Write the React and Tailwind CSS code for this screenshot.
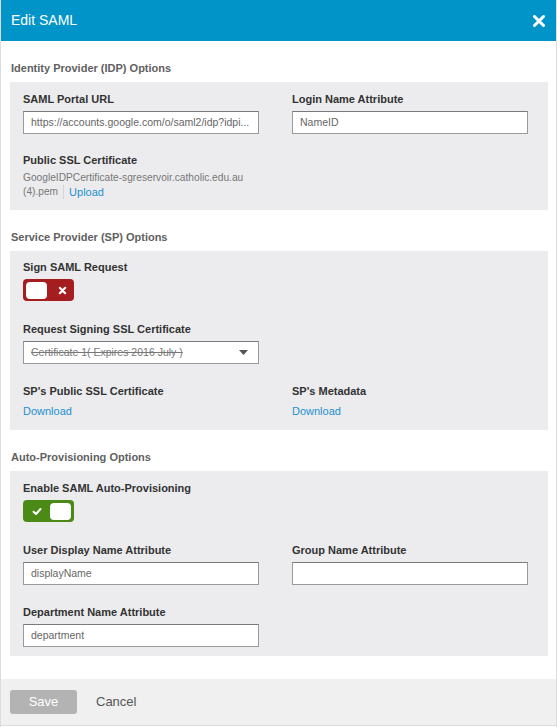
import React from "react";

const font = { fontFamily: '"Liberation Sans", Arial, sans-serif' };

function Label({ children }) {
  return <div className="text-[11px] leading-[14px] font-bold text-[#333]">{children}</div>;
}

function TextInput({ value }) {
  return (
    <div className="mt-[5px] h-[23px] w-[236px] bg-white border border-[#9a9a9a] border-t-[#7a7a7a] flex items-center px-[7px] text-[10.5px] text-[#666] overflow-hidden whitespace-nowrap">
      {value}
    </div>
  );
}

function SectionTitle({ children }) {
  return <div className="ml-[10px] text-[11px] leading-[14px] font-bold text-[#5f5f5f] mb-[7px]">{children}</div>;
}

function Panel({ children, className = "" }) {
  return <div className={"ml-[9px] w-[538px] bg-[#ececee] pl-[13px] " + className}>{children}</div>;
}

function ToggleOff() {
  return (
    <div className="mt-[5px] w-[51px] h-[22px] rounded-[4px] bg-[#a61d1f] flex items-center px-[3px]">
      <div className="w-[21px] h-[17px] rounded-[4px] bg-white" />
      <svg width="9" height="9" viewBox="0 0 10 10" className="ml-[11px]">
        <path d="M2 2 L8 8 M8 2 L2 8" stroke="white" strokeWidth="2.4" strokeLinecap="round" />
      </svg>
    </div>
  );
}

function ToggleOn() {
  return (
    <div className="mt-[5px] w-[51px] h-[22px] rounded-[4px] bg-[#4c8a17] flex items-center px-[3px]">
      <svg width="10" height="9" viewBox="0 0 10 9" className="ml-[6px]">
        <path d="M1.5 4.8 L4 7 L8.5 2" stroke="white" strokeWidth="2" fill="none" strokeLinecap="round" strokeLinejoin="round" />
      </svg>
      <div className="ml-auto w-[21px] h-[17px] rounded-[4px] bg-white" />
    </div>
  );
}

export default function App() {
  return (
    <div style={font} className="w-[557px] h-[727px] bg-white border-x border-[#dcdcdc] flex flex-col">
      <header className="h-[41px] bg-[#0094c9] flex items-center justify-between pl-[10px] pr-[10px]">
        <span className="text-white text-[14px]">Edit SAML</span>
        <svg width="12" height="12" viewBox="0 0 12 12" className="mr-[1px]">
          <path d="M1.5 1.5 L10.5 10.5 M10.5 1.5 L1.5 10.5" stroke="white" strokeWidth="3" strokeLinecap="round" />
        </svg>
      </header>

      <div className="pt-[20px]">
        <SectionTitle>Identity Provider (IDP) Options</SectionTitle>
        <Panel className="pt-[10px] pb-[11px]">
          <div className="grid grid-cols-[236px_236px] gap-x-[33px]">
            <div>
              <Label>SAML Portal URL</Label>
              <TextInput value="https://accounts.google.com/o/saml2/idp?idpi..." />
            </div>
            <div>
              <Label>Login Name Attribute</Label>
              <TextInput value="NameID" />
            </div>
          </div>
          <div className="mt-[19px]">
            <Label>Public SSL Certificate</Label>
            <div className="mt-[4px] text-[10.2px] leading-[14px] text-[#777]">
              <div>GoogleIDPCertificate-sgreservoir.catholic.edu.au</div>
              <div className="flex items-center">
                <span>(4).pem</span>
                <span className="mx-[5px] w-px h-[14px] bg-[#d4d4d4]" />
                <span className="text-[11px] text-[#1e90d0]">Upload</span>
              </div>
            </div>
          </div>
        </Panel>
      </div>

      <div className="pt-[20px]">
        <SectionTitle>Service Provider (SP) Options</SectionTitle>
        <Panel className="pt-[9px] pb-[12px]">
          <Label>Sign SAML Request</Label>
          <ToggleOff />
          <div className="mt-[21px]">
            <Label>Request Signing SSL Certificate</Label>
            <div className="mt-[5px] h-[23px] w-[236px] bg-white border border-[#9a9a9a] border-t-[#7a7a7a] flex items-center justify-between pl-[7px] pr-[10px] text-[10.5px] text-[#777]">
              <span className="line-through">Certificate 1( Expires 2016 July )</span>
              <svg width="9" height="5" viewBox="0 0 9 5">
                <path d="M0 0 L9 0 L4.5 5 Z" fill="#555" />
              </svg>
            </div>
          </div>
          <div className="mt-[20px] grid grid-cols-[236px_236px] gap-x-[33px]">
            <div>
              <Label>SP's Public SSL Certificate</Label>
              <div className="mt-[6px] text-[11px] leading-[14px] text-[#1e90d0]">Download</div>
            </div>
            <div>
              <Label>SP's Metadata</Label>
              <div className="mt-[6px] text-[11px] leading-[14px] text-[#1e90d0]">Download</div>
            </div>
          </div>
        </Panel>
      </div>

      <div className="pt-[20px]">
        <SectionTitle>Auto-Provisioning Options</SectionTitle>
        <Panel className="pt-[10px] pb-[9px]">
          <Label>Enable SAML Auto-Provisioning</Label>
          <ToggleOn />
          <div className="mt-[21px] grid grid-cols-[236px_236px] gap-x-[33px]">
            <div>
              <Label>User Display Name Attribute</Label>
              <TextInput value="displayName" />
            </div>
            <div>
              <Label>Group Name Attribute</Label>
              <TextInput value="" />
            </div>
          </div>
          <div className="mt-[20px]">
            <Label>Department Name Attribute</Label>
            <TextInput value="department" />
          </div>
        </Panel>
      </div>

      <footer className="mt-[23px] h-[47px] bg-[#f0f0f0] border-b border-[#dcdcdc] flex items-center pl-[9px]">
        <div className="w-[67px] h-[24px] rounded-[3px] bg-[#b3b3b3] text-white text-[13px] flex items-center justify-center">Save</div>
        <span className="ml-[19px] text-[13px] text-[#555]">Cancel</span>
      </footer>
    </div>
  );
}
